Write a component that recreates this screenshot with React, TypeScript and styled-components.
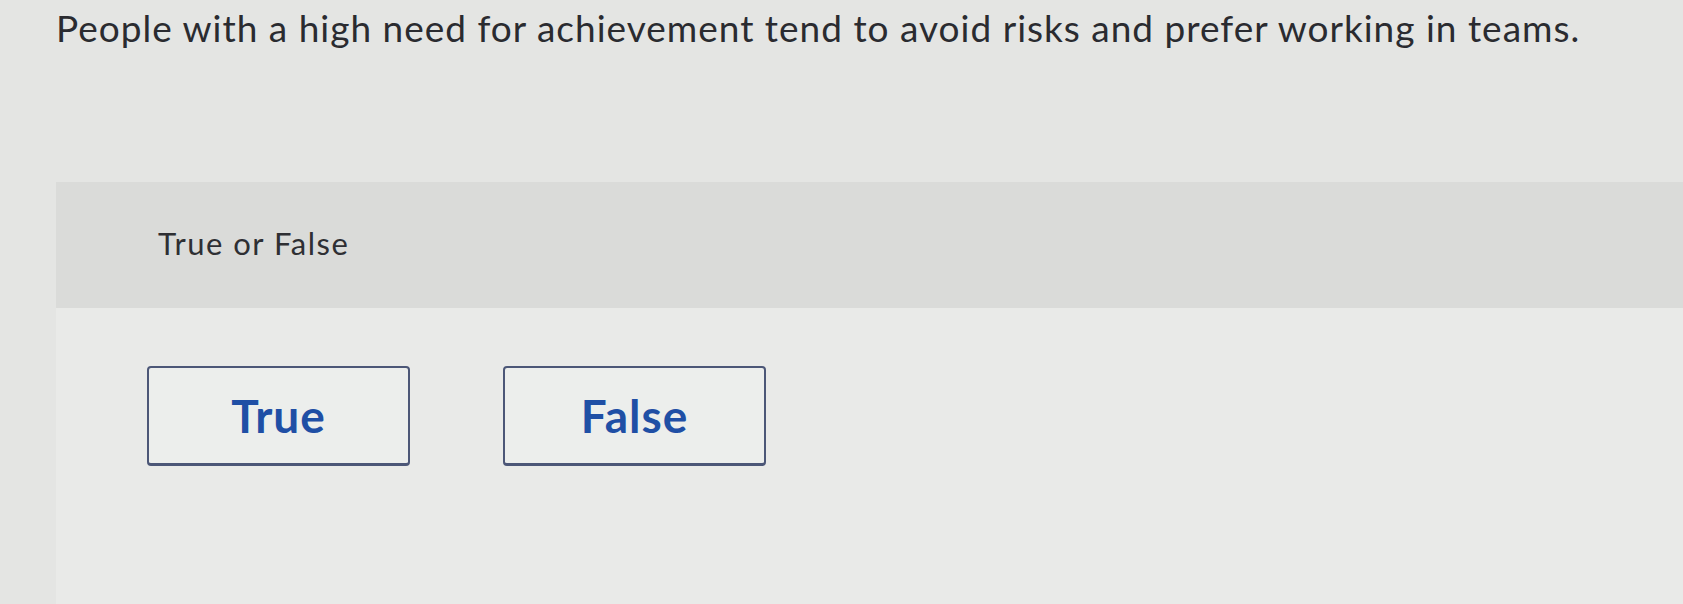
import React from 'react';
import styled, { createGlobalStyle } from 'styled-components';

const GlobalStyle = createGlobalStyle`
  html, body { margin: 0; padding: 0; }
  body {
    background: #e4e5e3;
    font-family: Lato, "Liberation Sans", Arial, sans-serif;
    color: #2b2c31;
  }
`;

const Page = styled.div`
  min-height: 604px;
  display: flex;
  flex-direction: column;
  padding-left: 56px;
  box-sizing: border-box;
`;

const Question = styled.h1`
  margin: 0;
  padding-top: 6px;
  height: 182px;
  box-sizing: border-box;
  font-size: 37px;
  line-height: 44px;
  letter-spacing: 1px;
  font-weight: 400;
  color: #2a2b30;
`;

const Card = styled.section`
  flex: 1;
  background: #e9eae8;
  display: flex;
  flex-direction: column;
`;

const Band = styled.div`
  height: 126px;
  background: #dadbd9;
  display: flex;
  align-items: center;
  padding-left: 102px;
  padding-bottom: 4px;
  box-sizing: border-box;
  font-size: 31px;
  letter-spacing: 1.5px;
  color: #2e2f33;
`;

const Options = styled.div`
  display: flex;
  gap: 93px;
  padding: 58px 0 0 91px;
`;

const Choice = styled.button`
  width: 263px;
  height: 100px;
  box-sizing: border-box;
  background: #eceeec;
  border: 2px solid #4c5777;
  border-bottom-width: 3px;
  border-radius: 4px;
  font-family: inherit;
  font-size: 46px;
  font-weight: 700;
  letter-spacing: 1px;
  color: #1f4fa5;
  cursor: pointer;
  display: flex;
  align-items: center;
  justify-content: center;
  padding: 0;
`;

export default function App() {
  return (
    <>
      <GlobalStyle />
      <Page>
        <Question>People with a high need for achievement tend to avoid risks and prefer working in teams.</Question>
        <Card>
          <Band>True or False</Band>
          <Options>
            <Choice>True</Choice>
            <Choice>False</Choice>
          </Options>
        </Card>
      </Page>
    </>
  );
}
